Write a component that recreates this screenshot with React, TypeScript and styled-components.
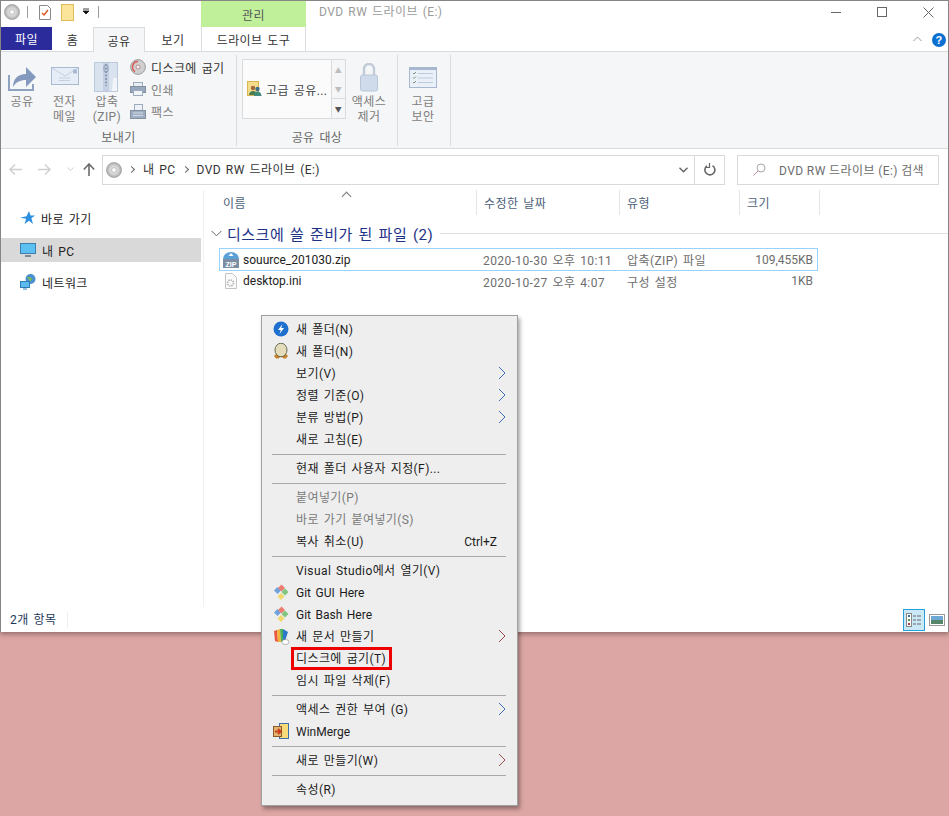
import React from 'react'
import styled, { createGlobalStyle } from 'styled-components'

const FONT = `Roboto, "Noto Sans CJK KR", "Noto Sans", sans-serif`

const GlobalStyle = createGlobalStyle`
  html, body { margin: 0; padding: 0; background: #dca6a4; }
  * { box-sizing: border-box; }
  body { font-family: ${FONT}; font-size: 12px; color: #1a1a1a; letter-spacing: 0.4px; word-spacing: 1.5px; }
`

const Disc = () => (
  <svg width="16" height="16" viewBox="0 0 16 16">
    <defs>
      <radialGradient id="discG" cx="0.5" cy="0.5" r="0.5">
        <stop offset="0" stopColor="#f2f2f2" />
        <stop offset="0.6" stopColor="#d2d2d2" />
        <stop offset="1" stopColor="#a8a8a8" />
      </radialGradient>
    </defs>
    <circle cx="8" cy="8" r="7.6" fill="url(#discG)" stroke="#9a9a9a" strokeWidth="0.6" />
    <circle cx="8" cy="8" r="2.4" fill="#fafafa" stroke="#a5a5a5" strokeWidth="0.6" />
  </svg>
)

const Chevron = ({ color = '#3f6fb5' }: { color?: string }) => (
  <svg width="8" height="14" viewBox="0 0 8 14">
    <path d="M1 1l6 6-6 6" fill="none" stroke={color} strokeWidth="1" />
  </svg>
)

const GitIcon = () => (
  <svg width="16" height="16" viewBox="0 0 16 16">
    <path d="M4.5 3l3.5 3.500L4.500 10 1 6.500z" fill="#6fa3dc" />
    <path d="M8.500 0.500L12 4 8.500 7.500 5 4z" fill="#ec7d6f" />
    <path d="M12 4.500l3.500 3.500L12 11.500 8.500 8z" fill="#7fc77f" />
    <path d="M8 9l3.500 3.500L8 16l-3.500-3.500z" fill="#f0d86c" />
  </svg>
)

const ShareIcon = () => (
  <svg width="30" height="30" viewBox="0 0 30 30">
    <path d="M2 13v15h24v-6" fill="none" stroke="#8fa3c0" strokeWidth="2" />
    <path d="M6 25c0-8 5-13 13-13V5l10 10-10 10v-7c-6 0-10 2-13 7z" fill="#8399bd" />
  </svg>
)

const MailIcon = () => (
  <svg width="28" height="20" viewBox="0 0 28 20">
    <rect x="0.500" y="0.500" width="27" height="17" fill="#e6edf6" stroke="#a9bad2" />
    <path d="M1 1l13 8 13-8" fill="none" stroke="#c3d0e2" />
    <rect x="22" y="2.500" width="4" height="4" fill="#a9bad2" />
    <path d="M8 11h11M8 13.500h11" stroke="#c3d0e2" />
  </svg>
)

const ZipIcon = () => (
  <svg width="26" height="30" viewBox="0 0 26 30">
    <rect x="0.500" y="0.500" width="23" height="29" fill="#d9e2ef" stroke="#bcc9dc" />
    <rect x="9" y="1" width="6" height="28" fill="#c4d0e2" />
    <path d="M12 2v22" stroke="#8c9cb5" strokeWidth="2" strokeDasharray="2 1.500" />
    <rect x="10" y="3" width="4" height="7" rx="2" fill="none" stroke="#8c9cb5" />
    <path d="M19 16h4v13h-5z" fill="#f1f4f8" />
  </svg>
)

const BurnIcon = () => (
  <svg width="16" height="16" viewBox="0 0 16 16">
    <circle cx="8" cy="8" r="7.400" fill="#cfcfcf" stroke="#8b8b8b" strokeWidth="0.800" />
    <path d="M8 2.500A5.500 5.500 0 0 0 5 12.600" fill="none" stroke="#d95a55" strokeWidth="1.500" />
    <circle cx="8" cy="8" r="2" fill="#f3f3f3" stroke="#a55" strokeWidth="0.600" />
  </svg>
)

const PrintIcon = () => (
  <svg width="16" height="14" viewBox="0 0 16 14">
    <rect x="3.500" y="0.500" width="9" height="4" fill="#e9eef5" stroke="#9eaabd" />
    <rect x="0.500" y="4.500" width="15" height="6" fill="#97a7be" stroke="#82909f" />
    <rect x="3.500" y="8.500" width="9" height="5" fill="#f2f4f8" stroke="#9eaabd" />
  </svg>
)

const FaxIcon = () => (
  <svg width="16" height="15" viewBox="0 0 16 15">
    <rect x="4.500" y="0.500" width="8" height="6" fill="#eef1f6" stroke="#9eaabd" />
    <rect x="0.500" y="6.500" width="15" height="8" fill="#9fadc2" stroke="#84929f" />
    <path d="M3 9h10M3 11.500h10" stroke="#d3dae5" />
  </svg>
)

const ShareFolderIcon = () => (
  <svg width="15" height="16" viewBox="0 0 15 16">
    <rect x="0.500" y="0.500" width="11" height="14" fill="#f6dd8c" stroke="#d9b64e" />
    <circle cx="6" cy="7" r="2.200" fill="#a0693a" />
    <path d="M2 14c0-3 2-4 4-4s4 1 4 4z" fill="#4b7d52" />
    <circle cx="10.500" cy="8" r="2.200" fill="#3f6f8f" />
    <path d="M7 15c0-3 1.500-4.500 3.500-4.500S14.500 12 14.500 15z" fill="#3f8a7a" />
  </svg>
)

const LockIcon = () => (
  <svg width="18" height="29" viewBox="0 0 18 29">
    <path d="M4 13V6a5 5 0 0 1 10 0v7" fill="none" stroke="#c2cbd8" strokeWidth="2.400" />
    <rect x="0.500" y="12" width="17" height="16" rx="2" fill="#cfdbeb" stroke="#b9c6d8" />
  </svg>
)

const SecurityIcon = () => (
  <svg width="28" height="21" viewBox="0 0 28 21">
    <rect x="0.500" y="0.500" width="27" height="20" fill="#e9f0f8" stroke="#a7b7cf" />
    <rect x="1" y="1" width="26" height="2" fill="#a7b7cf" />
    <path d="M9 6.500h15M9 11h15M9 15.500h15" stroke="#bccbdf" />
    <path d="M4 6l1 1 2-2M4 10.500l1 1 2-2M4 15l1 1 2-2" fill="none" stroke="#7f9079" />
  </svg>
)

const StarIcon = () => (
  <svg width="15" height="14" viewBox="0 0 15 14">
    <path d="M9 0l1.500 4.500H15l-3.600 2.800L13 13 9 9.800 4.500 13l1.600-5.200L0 6.800l6.500-1.500z" fill="#2d8fe0" />
  </svg>
)

const PcIcon = () => (
  <svg width="16" height="16" viewBox="0 0 16 16">
    <rect x="0.500" y="1.500" width="15" height="10" fill="#5cc0f2" stroke="#3f7fb0" />
    <path d="M5 14h6" stroke="#7d8b99" strokeWidth="2" />
  </svg>
)

const NetworkIcon = () => (
  <svg width="16" height="16" viewBox="0 0 16 16">
    <circle cx="10.500" cy="5" r="5" fill="#4a90d0" />
    <path d="M7 2.500c2 1 4 .5 5.500 2L10 8z" fill="#79b85c" />
    <rect x="0.500" y="7.500" width="9" height="6" fill="#5cbcf0" stroke="#2f7cb5" />
    <path d="M3 15h4" stroke="#2f7cb5" />
  </svg>
)

const ZipFileIcon = () => (
  <svg width="16" height="16" viewBox="0 0 16 16">
    <path d="M0 7a8 7 0 0 1 16 0z" fill="#5aa0d8" />
    <rect x="0" y="7" width="16" height="9" fill="#7b8ea3" />
    <path d="M8 1l2.500 3h-5z" fill="#fff" />
    <text x="8" y="14.500" textAnchor="middle" fontSize="7" fontWeight="700" fill="#fff" fontFamily="Liberation Sans, sans-serif">ZIP</text>
  </svg>
)

const IniFileIcon = () => (
  <svg width="14" height="16" viewBox="0 0 14 16">
    <path d="M1.500 0.500h7l4 4v11h-11z" fill="#fbfbfb" stroke="#c4c4c4" />
    <circle cx="6.500" cy="10" r="3" fill="none" stroke="#b5b5b5" strokeWidth="1.600" strokeDasharray="1.500 .8" />
  </svg>
)

const BoltIcon = () => (
  <svg width="16" height="16" viewBox="0 0 16 16">
    <circle cx="8" cy="8" r="7.500" fill="#1e6fce" />
    <path d="M9.500 3L5 9h2.800l-1.300 4L11 7H8.200z" fill="#fff" />
  </svg>
)

const EggIcon = () => (
  <svg width="16" height="16" viewBox="0 0 16 16">
    <path d="M1 13l2 2.500h2.500L7 14h2l1.500 1.500H13l2-2.500-2-2H3z" fill="#c8802a" />
    <ellipse cx="8" cy="7" rx="6" ry="6.800" fill="#e4ddbb" stroke="#5f5b47" strokeWidth="0.900" />
  </svg>
)

const NewDocIcon = () => (
  <svg width="17" height="17" viewBox="0 0 17 17">
    <path d="M1 3l3-1 1 12-3-1z" fill="#e9573f" />
    <path d="M4 2l3-1 1 13-3 0z" fill="#f2b53a" />
    <path d="M7 1l3 0 1 11-3 2z" fill="#4fb05a" />
    <path d="M10 1l5 3-3 9-2-1z" fill="#2e78c8" />
    <ellipse cx="12.500" cy="14" rx="3.500" ry="2.500" fill="#fff" stroke="#777" strokeWidth="0.500" />
  </svg>
)

const WinMergeIcon = () => (
  <svg width="16" height="16" viewBox="0 0 16 16">
    <rect x="6.500" y="0.500" width="9" height="15" fill="#f7da7a" stroke="#3c6fa8" />
    <rect x="0.500" y="3.500" width="8" height="10" fill="#e3b26d" stroke="#8a5a2c" />
    <path d="M2 8.500h5M5 6l3 2.500L5 11" fill="none" stroke="#c9401f" strokeWidth="1.800" />
  </svg>
)

const Page = styled.div`
  position: relative;
  width: 949px;
  height: 816px;
  overflow: hidden;
  background: #dca6a4;
`

const Window = styled.div`
  display: flex;
  flex-direction: column;
  height: 632px;
  background: #fff;
  border: 1px solid #858585;
  border-bottom: 0;
  box-shadow: 0 2px 5px rgba(70, 50, 50, 0.5);
`

const TitleRow = styled.div`
  display: flex;
  align-items: flex-start;
  height: 26px;
`

const QuickAccess = styled.div`
  display: flex;
  align-items: center;
  width: 200px;
  height: 22px;
  padding-left: 3px;
`

const QuickSep = styled.span<{ $l: number; $r?: number }>`
  width: 1px;
  height: 12px;
  background: #9c9c9c;
  margin: 0 ${p => p.$r ?? 0}px 0 ${p => p.$l}px;
`

const QuickIcon = styled.span<{ $l: number }>`
  display: flex;
  margin-left: ${p => p.$l}px;
`

const ManageTab = styled.div`
  display: flex;
  align-items: center;
  justify-content: center;
  width: 105px;
  height: 26px;
  background: #c1f09b;
  color: #555;
  font-size: 12px;
`

const WindowTitle = styled.div`
  margin-left: 13px;
  height: 24px;
  line-height: 23px;
  color: #9b9b9b;
  font-size: 12px;
  flex: 1;
`

const WindowButtons = styled.div`
  display: flex;
  align-items: center;
  gap: 36px;
  height: 22px;
  padding-right: 14px;
`

const TabRow = styled.div`
  display: flex;
  height: 25px;
  border-bottom: 1px solid #dadbdc;
`

const Tab = styled.div<{ $w: number; $kind?: 'file' | 'active' | 'tool' }>`
  display: flex;
  align-items: center;
  justify-content: center;
  width: ${p => p.$w}px;
  height: ${p => (p.$kind === 'active' ? 25 : p.$kind === 'file' ? 23 : 24)}px;
  font-size: 12px;
  color: ${p => (p.$kind === 'file' ? '#fff' : '#333')};
  background: ${p => (p.$kind === 'file' ? '#2b2b9c' : p.$kind === 'active' ? '#f5f6f7' : 'transparent')};
  border-top: ${p => (p.$kind === 'active' ? '1px solid #dadbdc' : '0')};
  border-left: ${p => (p.$kind === 'tool' || p.$kind === 'active' ? '1px solid #dadbdc' : '0')};
  border-right: ${p => (p.$kind === 'tool' || p.$kind === 'active' ? '1px solid #dadbdc' : '0')};
`

const TabSpacer = styled.div`
  flex: 1;
  display: flex;
  justify-content: flex-end;
  align-items: center;
  gap: 10px;
  padding-right: 2px;
  height: 24px;
`

const HelpButton = styled.div`
  display: flex;
  align-items: center;
  justify-content: center;
  width: 14px;
  height: 14px;
  border-radius: 50%;
  background: #0a6fd0;
  color: #fff;
  font: 700 11px "Liberation Sans", sans-serif;
  margin-top: 1px;
`

const Ribbon = styled.div`
  display: flex;
  height: 97px;
  background: #f5f6f7;
  border-bottom: 1px solid #dadbdc;
  padding-top: 3px;
`

const RibbonGroup = styled.div<{ $w: number }>`
  display: flex;
  flex-direction: column;
  width: ${p => p.$w}px;
  height: 91px;
  border-right: 1px solid #dadbdc;
`

const GroupBody = styled.div`
  flex: 1;
  display: flex;
  min-height: 0;
`

const GroupLabel = styled.div`
  flex: none;
  height: 16px;
  line-height: 16px;
  text-align: center;
  font-size: 12px;
  color: #666;
`

const BigButton = styled.div<{ $w: number }>`
  display: flex;
  flex-direction: column;
  align-items: center;
  flex: none;
  width: ${p => p.$w}px;
  color: #7d7d7d;
  font-size: 12px;
  line-height: 15px;
  text-align: center;
`

const BigIcon = styled.div`
  display: flex;
  flex: none;
  align-items: center;
  justify-content: center;
  height: 36px;
  margin-top: 4px;
`

const SmallColumn = styled.div`
  display: flex;
  flex-direction: column;
  padding-top: 1px;
`

const SmallButton = styled.div<{ $on?: boolean }>`
  display: flex;
  align-items: center;
  gap: 5px;
  height: 22px;
  padding-left: 2px;
  color: ${p => (p.$on ? '#333' : '#7d7d7d')};
  white-space: nowrap;
`

const ShareBox = styled.div`
  display: flex;
  flex: none;
  margin: 4px 0 0 5px;
  height: 60px;
  width: 90px;
  border: 1px solid #dadbdc;
  background: #fbfbfc;
`

const ShareItem = styled.div`
  flex: 1;
  display: flex;
  align-items: center;
  gap: 4px;
  padding-left: 4px;
  color: #444;
  white-space: nowrap;
  overflow: hidden;
`

const ShareScroll = styled.div`
  display: flex;
  flex: none;
  flex-direction: column;
  margin-top: 4px;
  width: 14px;
  height: 60px;
  border: 1px solid #dadbdc;
  border-left: 0;
  align-items: center;
`

const ScrollCell = styled.div<{ $more?: boolean }>`
  flex: 1;
  display: flex;
  align-items: center;
  justify-content: center;
  width: 100%;
  font-size: 7px;
  color: ${p => (p.$more ? '#555' : '#bdbdbd')};
  border-top: ${p => (p.$more ? '1px solid #dadbdc' : '0')};
`

const NavBar = styled.div`
  display: flex;
  align-items: center;
  height: 41px;
  padding: 0 9px 0 0;
`

const NavArrows = styled.div`
  display: flex;
  flex: none;
  align-items: center;
  width: 101px;
  padding-left: 7px;
`

const NavArrow = styled.div<{ $w: number }>`
  display: flex;
  flex: none;
  justify-content: center;
  width: ${p => p.$w}px;
`

const AddressBox = styled.div`
  display: flex;
  align-items: center;
  width: 623px;
  height: 30px;
  border: 1px solid #d9d9d9;
`

const Crumbs = styled.div`
  flex: 1;
  display: flex;
  align-items: center;
  padding-left: 3px;
  line-height: 26px;
  color: #333;
`

const CrumbArrow = styled.span`
  width: 5px;
  height: 5px;
  border-top: 1px solid #666;
  border-right: 1px solid #666;
  transform: rotate(45deg);
  margin: 0 9px 0 7px;
`

const AddressDrop = styled.div`
  display: flex;
  align-items: center;
  justify-content: center;
  width: 22px;
`

const RefreshCell = styled.div`
  display: flex;
  align-items: center;
  justify-content: center;
  width: 30px;
  height: 100%;
  border-left: 1px solid #d9d9d9;
`

const SearchBox = styled.div`
  display: flex;
  align-items: center;
  gap: 13px;
  width: 202px;
  height: 30px;
  margin-left: 12px;
  padding-left: 15px;
  border: 1px solid #d9d9d9;
  color: #6d6d6d;
  white-space: nowrap;
  overflow: hidden;
  word-spacing: 0;
`

const Body = styled.div`
  flex: 1;
  display: flex;
  min-height: 0;
`

const Sidebar = styled.div`
  width: 203px;
  padding-top: 16px;
  border-right: 1px solid #f0f0f0;
`

const SideItem = styled.div<{ $on?: boolean }>`
  display: flex;
  align-items: center;
  gap: 6px;
  width: 200px;
  height: 24px;
  margin-bottom: 8px;
  padding-left: 19px;
  background: ${p => (p.$on ? '#d9d9d9' : 'transparent')};
  color: #222;
`

const Content = styled.div`
  flex: 1;
  display: flex;
  flex-direction: column;
  position: relative;
`

const Columns = styled.div`
  display: flex;
  height: 26px;
  margin-left: 12px;
`

const ColumnHead = styled.div<{ $w: number }>`
  position: relative;
  width: ${p => p.$w}px;
  height: 25px;
  line-height: 28px;
  padding-left: 7px;
  color: #4c607a;
  border-right: 1px solid #e5e5e5;
`

const SortCaret = styled.span`
  position: absolute;
  top: 0;
  left: 127px;
  width: 7px;
  height: 7px;
  margin-top: 3px;
  border-top: 1px solid #777;
  border-left: 1px solid #777;
  transform: rotate(45deg);
`

const GroupHeader = styled.div`
  display: flex;
  align-items: center;
  gap: 5px;
  height: 24px;
  margin: 5px 0 3px 7px;
  color: #1e3287;
  font-size: 15px;
  letter-spacing: 0.5px;
  white-space: nowrap;
`

const GroupRule = styled.span`
  flex: 1;
  height: 1px;
  background: #e2e2e2;
  margin-left: 2px;
`

const FileRow = styled.div<{ $on?: boolean }>`
  display: flex;
  align-items: center;
  width: 599px;
  height: ${p => (p.$on ? 23 : 20)}px;
  margin-left: 15px;
  border: 1px solid ${p => (p.$on ? '#99d1ff' : 'transparent')};
  color: #6d6d6d;
  white-space: nowrap;
`

const FileName = styled.div`
  display: flex;
  align-items: center;
  gap: 4px;
  width: 263px;
  padding-left: 3px;
  color: #222;
  letter-spacing: 0;
`

const FileIcon = styled.span`
  display: flex;
  justify-content: center;
  width: 16px;
`

const FileDate = styled.div`
  width: 144px;
`

const FileType = styled.div`
  width: 118px;
`

const FileSize = styled.div`
  flex: 1;
  text-align: right;
  padding-right: 4px;
  letter-spacing: 0;
`

const StatusBar = styled.div`
  display: flex;
  align-items: center;
  height: 25px;
  padding: 1px 0 0 9px;
  color: #1e395b;
`

const StatusCount = styled.div`
  width: 58px;
  border-right: 1px solid #eee;
  height: 16px;
  line-height: 16px;
`

const ViewButtons = styled.div`
  margin-left: auto;
  display: flex;
  align-items: center;
  gap: 4px;
  padding-right: 3px;
`

const ViewButton = styled.div<{ $on?: boolean }>`
  display: flex;
  align-items: center;
  justify-content: center;
  width: ${p => (p.$on ? 22 : 16)}px;
  height: ${p => (p.$on ? 22 : 16)}px;
  border: ${p => (p.$on ? '1px solid #26a0da' : '0')};
  background: ${p => (p.$on ? '#cbe8f6' : 'transparent')};
`

const Menu = styled.div`
  position: absolute;
  left: 261px;
  top: 315px;
  width: 257px;
  height: 491px;
  padding: 2px;
  background: #eeeeee;
  border: 1px solid #a0a0a0;
  box-shadow: 2px 3px 4px rgba(0, 0, 0, 0.35);
`

const MenuRow = styled.div<{ $off?: boolean; $latin?: boolean }>`
  display: flex;
  align-items: center;
  height: 22px;
  padding-left: 9px;
  padding-right: 9px;
  color: ${p => (p.$off ? '#7a7a7a' : '#1c1c1c')};
  white-space: nowrap;
  line-height: 22px;
  letter-spacing: ${p => (p.$latin ? '0' : '0.4px')};
`

const MenuIcon = styled.div`
  display: flex;
  align-items: center;
  justify-content: center;
  width: 24px;
  height: 18px;
  margin: 0 2px 0 -4px;
  flex: none;
`

const MenuLabel = styled.div`
  flex: 1;
  padding: 2px 0 0 1px;
`

const MenuKey = styled.span`
  margin-right: 9px;
  padding-top: 2px;
  letter-spacing: 0;
`

const Marked = styled.span`
  position: relative;
  display: inline-block;
  &::after {
    content: '';
    position: absolute;
    left: -5px;
    right: -6px;
    top: -1px;
    bottom: 0;
    border: 3px solid #ee0000;
  }
`

const MenuSep = styled.div`
  height: 1px;
  margin: 4px 9px 2px 8px;
  background: #a8a8a8;
`

type MenuEntry =
  | { sep: true }
  | { label: string; icon?: React.ReactNode; sub?: boolean; red?: boolean; off?: boolean; hint?: string; mark?: boolean }

const MENU: MenuEntry[] = [
  { label: '새 폴더(N)', icon: <BoltIcon /> },
  { label: '새 폴더(N)', icon: <EggIcon /> },
  { label: '보기(V)', sub: true },
  { label: '정렬 기준(O)', sub: true },
  { label: '분류 방법(P)', sub: true },
  { label: '새로 고침(E)' },
  { sep: true },
  { label: '현재 폴더 사용자 지정(F)...' },
  { sep: true },
  { label: '붙여넣기(P)', off: true },
  { label: '바로 가기 붙여넣기(S)', off: true },
  { label: '복사 취소(U)', hint: 'Ctrl+Z' },
  { sep: true },
  { label: 'Visual Studio에서 열기(V)' },
  { label: 'Git GUI Here', icon: <GitIcon /> },
  { label: 'Git Bash Here', icon: <GitIcon /> },
  { label: '새 문서 만들기', icon: <NewDocIcon />, sub: true, red: true },
  { label: '디스크에 굽기(T)', mark: true },
  { label: '임시 파일 삭제(F)' },
  { sep: true },
  { label: '액세스 권한 부여 (G)', sub: true },
  { label: 'WinMerge', icon: <WinMergeIcon /> },
  { sep: true },
  { label: '새로 만들기(W)', sub: true, red: true },
  { sep: true },
  { label: '속성(R)' },
]

const App: React.FC = () => (
  <Page>
    <GlobalStyle />
    <Window>
      <TitleRow>
        <QuickAccess>
          <Disc />
          <QuickSep $l={7} $r={11} />
          <svg width="12" height="15" viewBox="0 0 12 15">
            <path d="M.5.500h8l3 3v11H.500z" fill="#fff" stroke="#8a8a8a" />
            <path d="M3 8l2 2 4-5" fill="none" stroke="#d9541e" strokeWidth="1.400" />
          </svg>
          <QuickIcon $l={10}>
            <svg width="13" height="17" viewBox="0 0 13 17">
              <rect x="0.500" y="0.500" width="12" height="16" fill="#fbe59b" stroke="#e0bc58" />
            </svg>
          </QuickIcon>
          <QuickIcon $l={8}>
            <svg width="8" height="8" viewBox="0 0 8 8">
              <path d="M1 1h6M1 3h6l-3 3z" fill="#111" stroke="#111" strokeWidth="0.800" />
            </svg>
          </QuickIcon>
          <QuickSep $l={8} />
        </QuickAccess>
        <ManageTab>관리</ManageTab>
        <WindowTitle>DVD RW 드라이브 (E:)</WindowTitle>
        <WindowButtons>
          <svg width="10" height="10"><path d="M0 5.500h10" stroke="#666" /></svg>
          <svg width="10" height="10"><rect x="0.500" y="0.500" width="9" height="9" fill="none" stroke="#666" /></svg>
          <svg width="11" height="11"><path d="M.5.500l10 10M10.500.500l-10 10" stroke="#666" fill="none" /></svg>
        </WindowButtons>
      </TitleRow>
      <TabRow>
        <Tab $w={51} $kind="file">파일</Tab>
        <Tab $w={41}>홈</Tab>
        <Tab $w={52} $kind="active">공유</Tab>
        <Tab $w={56}>보기</Tab>
        <Tab $w={105} $kind="tool">드라이브 도구</Tab>
        <TabSpacer>
          <svg width="9" height="6"><path d="M.5 5l4-4 4 4" fill="none" stroke="#999" /></svg>
          <HelpButton>?</HelpButton>
        </TabSpacer>
      </TabRow>
      <Ribbon>
        <RibbonGroup $w={236}>
          <GroupBody>
            <BigButton $w={42}>
              <BigIcon><ShareIcon /></BigIcon>공유
            </BigButton>
            <BigButton $w={43}>
              <BigIcon><MailIcon /></BigIcon>전자<br />메일
            </BigButton>
            <BigButton $w={42}>
              <BigIcon><ZipIcon /></BigIcon>압축<br />(ZIP)
            </BigButton>
            <SmallColumn>
              <SmallButton $on><BurnIcon />디스크에 굽기</SmallButton>
              <SmallButton><PrintIcon />인쇄</SmallButton>
              <SmallButton><FaxIcon />팩스</SmallButton>
            </SmallColumn>
          </GroupBody>
          <GroupLabel>보내기</GroupLabel>
        </RibbonGroup>
        <RibbonGroup $w={161}>
          <GroupBody>
            <ShareBox>
              <ShareItem><ShareFolderIcon />고급 공유...</ShareItem>
            </ShareBox>
            <ShareScroll>
              <ScrollCell>▲</ScrollCell>
              <ScrollCell>▼</ScrollCell>
              <ScrollCell $more>▼</ScrollCell>
            </ShareScroll>
            <BigButton $w={46}>
              <BigIcon><LockIcon /></BigIcon>액세스<br />제거
            </BigButton>
          </GroupBody>
          <GroupLabel>공유 대상</GroupLabel>
        </RibbonGroup>
        <RibbonGroup $w={53}>
          <GroupBody>
            <BigButton $w={50}>
              <BigIcon><SecurityIcon /></BigIcon>고급<br />보안
            </BigButton>
          </GroupBody>
        </RibbonGroup>
      </Ribbon>
      <NavBar>
        <NavArrows>
          <NavArrow $w={14}>
            <svg width="13" height="11"><path d="M6 .500l-5 5 5 5M1 5.500h12" fill="none" stroke="#cfcfcf" strokeWidth="1.400" /></svg>
          </NavArrow>
          <NavArrow $w={45}>
            <svg width="13" height="11"><path d="M7 .500l5 5-5 5M12 5.500H0" fill="none" stroke="#cfcfcf" strokeWidth="1.400" /></svg>
          </NavArrow>
          <NavArrow $w={7}>
            <svg width="7" height="5"><path d="M.5.500l3 3 3-3" fill="none" stroke="#cfcfcf" /></svg>
          </NavArrow>
          <NavArrow $w={30}>
            <svg width="12" height="13"><path d="M.8 6.500L6 1l5.200 5.500M6 1v12" fill="none" stroke="#6b6b6b" strokeWidth="1.600" /></svg>
          </NavArrow>
        </NavArrows>
        <AddressBox>
          <Crumbs>
            <Disc />
            <CrumbArrow />
            <span>내 PC</span>
            <CrumbArrow />
            <span>DVD RW 드라이브 (E:)</span>
          </Crumbs>
          <AddressDrop>
            <svg width="9" height="6"><path d="M.5.800l4 4 4-4" fill="none" stroke="#666" strokeWidth="1.500" /></svg>
          </AddressDrop>
          <RefreshCell>
            <svg width="12" height="13" viewBox="0 0 12 13">
              <path d="M3 2.800a5 5 0 1 0 5.500-.2" fill="none" stroke="#666" strokeWidth="1.600" />
              <path d="M5.500 0v4.500H1" fill="none" stroke="#666" strokeWidth="1.200" />
            </svg>
          </RefreshCell>
        </AddressBox>
        <SearchBox>
          <svg width="13" height="13" viewBox="0 0 13 13">
            <circle cx="8" cy="5" r="4" fill="none" stroke="#a9a9a9" />
            <path d="M5 8l-4.500 4.500" stroke="#c58f9f" />
          </svg>
          DVD RW 드라이브 (E:) 검색
        </SearchBox>
      </NavBar>
      <Body>
        <Sidebar>
          <SideItem><StarIcon />바로 가기</SideItem>
          <SideItem $on><PcIcon />내 PC</SideItem>
          <SideItem><NetworkIcon />네트워크</SideItem>
        </Sidebar>
        <Content>
          <Columns>
            <ColumnHead $w={261}>이름<SortCaret /></ColumnHead>
            <ColumnHead $w={143}>수정한 날짜</ColumnHead>
            <ColumnHead $w={120}>유형</ColumnHead>
            <ColumnHead $w={80}>크기</ColumnHead>
          </Columns>
          <GroupHeader>
            <svg width="11" height="7"><path d="M.5.800l5 5 5-5" fill="none" stroke="#666" /></svg>
            디스크에 쓸 준비가 된 파일 (2)
            <GroupRule />
          </GroupHeader>
          <FileRow $on>
            <FileName><FileIcon><ZipFileIcon /></FileIcon>souurce_201030.zip</FileName>
            <FileDate>2020-10-30 오후 10:11</FileDate>
            <FileType>압축(ZIP) 파일</FileType>
            <FileSize>109,455KB</FileSize>
          </FileRow>
          <FileRow>
            <FileName><FileIcon><IniFileIcon /></FileIcon>desktop.ini</FileName>
            <FileDate>2020-10-27 오후 4:07</FileDate>
            <FileType>구성 설정</FileType>
            <FileSize>1KB</FileSize>
          </FileRow>
        </Content>
      </Body>
      <StatusBar>
        <StatusCount>2개 항목</StatusCount>
        <ViewButtons>
          <ViewButton $on>
            <svg width="16" height="14" viewBox="0 0 16 14">
              <rect x="0.500" y="0.500" width="5" height="13" fill="#fff" stroke="#888" />
              <rect x="2" y="2" width="2" height="2" fill="#3a6ea5" />
              <rect x="2" y="6" width="2" height="2" fill="#5a9a5a" />
              <rect x="2" y="10" width="2" height="2" fill="#b04040" />
              <path d="M7 3h3M11 3h4M7 7h3M11 7h4M7 11h3M11 11h4" stroke="#666" />
            </svg>
          </ViewButton>
          <ViewButton>
            <svg width="16" height="12" viewBox="0 0 16 12">
              <rect x="0.500" y="0.500" width="15" height="11" fill="#fff" stroke="#999" />
              <rect x="2" y="2" width="12" height="4" fill="#6fa7d6" />
              <rect x="2" y="6" width="12" height="4" fill="#55866a" />
            </svg>
          </ViewButton>
        </ViewButtons>
      </StatusBar>
    </Window>
    <Menu>
      {MENU.map((item, i) =>
        'sep' in item ? (
          <MenuSep key={i} />
        ) : (
          <MenuRow key={i} $off={item.off} $latin={!/[가-힣]/.test(item.label)}>
            <MenuIcon>{item.icon}</MenuIcon>
            <MenuLabel>{item.mark ? <Marked>{item.label}</Marked> : item.label}</MenuLabel>
            {item.hint && <MenuKey>{item.hint}</MenuKey>}
            {item.sub && <Chevron color={item.red ? '#9c4a4a' : '#3f6fb5'} />}
          </MenuRow>
        ),
      )}
    </Menu>
  </Page>
)

export default App
